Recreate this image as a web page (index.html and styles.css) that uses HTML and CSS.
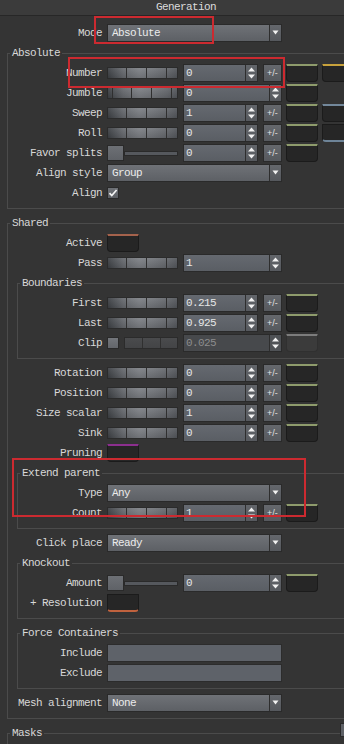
FILE: index.html
```html
<!DOCTYPE html>
<html>
<head>
<meta charset="utf-8">
<link rel="stylesheet" href="styles.css">
</head>
<body>
<div class="panel">
  <div class="title">Generation</div>

  <div class="row mode">
    <span class="lab">Mode</span>
    <div class="dd"><span class="dd-v">Absolute</span><span class="dd-a"><svg width="11" height="16" viewBox="0 0 11 16"><path d="M2.5 5.5h6l-3 4z" fill="#f2f2f2"/></svg></span></div>
  </div>

  <fieldset class="g first">
    <legend>Absolute</legend>
    <div class="gb">
      <div class="row">
        <span class="lab">Number</span><span class="sl"></span>
        <span class="sp"><span class="sp-f">0</span><span class="sp-a"><svg width="11" height="16" viewBox="0 0 11 16"><path d="M2 6.5L5.5 2.5L9 6.5z M2 9.5h7L5.5 13.5z" fill="#f2f2f2"/></svg></span></span>
        <span class="pm">+/-</span><span class="bx c-green"></span><span class="bx c-yellow"></span>
      </div>
      <div class="row">
        <span class="lab">Jumble</span><span class="sl alt"></span>
        <span class="sp long"><span class="sp-f">0</span><span class="sp-a"><svg width="11" height="16" viewBox="0 0 11 16"><path d="M2 6.5L5.5 2.5L9 6.5z M2 9.5h7L5.5 13.5z" fill="#f2f2f2"/></svg></span></span>
        <span class="bx c-green"></span>
      </div>
      <div class="row">
        <span class="lab">Sweep</span><span class="sl"></span>
        <span class="sp"><span class="sp-f">1</span><span class="sp-a"><svg width="11" height="16" viewBox="0 0 11 16"><path d="M2 6.5L5.5 2.5L9 6.5z M2 9.5h7L5.5 13.5z" fill="#f2f2f2"/></svg></span></span>
        <span class="pm">+/-</span><span class="bx c-green"></span><span class="bx c-blue"></span>
      </div>
      <div class="row">
        <span class="lab">Roll</span><span class="sl"></span>
        <span class="sp"><span class="sp-f">0</span><span class="sp-a"><svg width="11" height="16" viewBox="0 0 11 16"><path d="M2 6.5L5.5 2.5L9 6.5z M2 9.5h7L5.5 13.5z" fill="#f2f2f2"/></svg></span></span>
        <span class="pm">+/-</span><span class="bx c-green"></span><span class="bx c-none b-blue"></span>
      </div>
      <div class="row">
        <span class="lab">Favor splits</span><span class="fs"><span class="fs-h"></span><span class="fs-t"></span></span>
        <span class="sp"><span class="sp-f">0</span><span class="sp-a"><svg width="11" height="16" viewBox="0 0 11 16"><path d="M2 6.5L5.5 2.5L9 6.5z M2 9.5h7L5.5 13.5z" fill="#f2f2f2"/></svg></span></span>
        <span class="pm">+/-</span><span class="bx c-green"></span>
      </div>
      <div class="row">
        <span class="lab">Align style</span>
        <div class="dd"><span class="dd-v">Group</span><span class="dd-a"><svg width="11" height="16" viewBox="0 0 11 16"><path d="M2.5 5.5h6l-3 4z" fill="#f2f2f2"/></svg></span></div>
      </div>
      <div class="row">
        <span class="lab">Align</span>
        <span class="ck"><svg width="12" height="12" viewBox="0 0 12 12"><path d="M2.5 6.2L4.8 8.6L9.6 3" fill="none" stroke="#f4f4f4" stroke-width="1.7"/></svg></span>
      </div>
    </div>
  </fieldset>

  <fieldset class="g wide">
    <legend>Shared</legend>
    <div class="gb">
      <div class="row">
        <span class="lab">Active</span><span class="bx c-brown"></span>
      </div>
      <div class="row">
        <span class="lab">Pass</span><span class="sl"></span>
        <span class="sp long"><span class="sp-f">1</span><span class="sp-a"><svg width="11" height="16" viewBox="0 0 11 16"><path d="M2 6.5L5.5 2.5L9 6.5z M2 9.5h7L5.5 13.5z" fill="#f2f2f2"/></svg></span></span>
      </div>

      <fieldset class="g inner">
        <legend>Boundaries</legend>
        <div class="gb">
          <div class="row">
            <span class="lab">First</span><span class="sl"></span>
            <span class="sp"><span class="sp-f">0.215</span><span class="sp-a"><svg width="11" height="16" viewBox="0 0 11 16"><path d="M2 6.5L5.5 2.5L9 6.5z M2 9.5h7L5.5 13.5z" fill="#f2f2f2"/></svg></span></span>
            <span class="pm">+/-</span><span class="bx c-green"></span>
          </div>
          <div class="row">
            <span class="lab">Last</span><span class="sl"></span>
            <span class="sp"><span class="sp-f">0.925</span><span class="sp-a"><svg width="11" height="16" viewBox="0 0 11 16"><path d="M2 6.5L5.5 2.5L9 6.5z M2 9.5h7L5.5 13.5z" fill="#f2f2f2"/></svg></span></span>
            <span class="pm">+/-</span><span class="bx c-green"></span>
          </div>
          <div class="row">
            <span class="lab">Clip</span><span class="cb"></span><span class="sl off"></span>
            <span class="sp long off"><span class="sp-f">0.025</span><span class="sp-a"><svg width="11" height="16" viewBox="0 0 11 16"><path d="M2 6.5L5.5 2.5L9 6.5z M2 9.5h7L5.5 13.5z" fill="#f2f2f2"/></svg></span></span>
            <span class="bx off c-gray"></span>
          </div>
        </div>
      </fieldset>

      <div class="row">
        <span class="lab">Rotation</span><span class="sl"></span>
        <span class="sp"><span class="sp-f">0</span><span class="sp-a"><svg width="11" height="16" viewBox="0 0 11 16"><path d="M2 6.5L5.5 2.5L9 6.5z M2 9.5h7L5.5 13.5z" fill="#f2f2f2"/></svg></span></span>
        <span class="pm">+/-</span><span class="bx c-green"></span>
      </div>
      <div class="row">
        <span class="lab">Position</span><span class="sl"></span>
        <span class="sp"><span class="sp-f">0</span><span class="sp-a"><svg width="11" height="16" viewBox="0 0 11 16"><path d="M2 6.5L5.5 2.5L9 6.5z M2 9.5h7L5.5 13.5z" fill="#f2f2f2"/></svg></span></span>
        <span class="pm">+/-</span><span class="bx c-green"></span>
      </div>
      <div class="row">
        <span class="lab">Size scalar</span><span class="sl"></span>
        <span class="sp"><span class="sp-f">1</span><span class="sp-a"><svg width="11" height="16" viewBox="0 0 11 16"><path d="M2 6.5L5.5 2.5L9 6.5z M2 9.5h7L5.5 13.5z" fill="#f2f2f2"/></svg></span></span>
        <span class="pm">+/-</span><span class="bx c-green"></span>
      </div>
      <div class="row">
        <span class="lab">Sink</span><span class="sl"></span>
        <span class="sp"><span class="sp-f">0</span><span class="sp-a"><svg width="11" height="16" viewBox="0 0 11 16"><path d="M2 6.5L5.5 2.5L9 6.5z M2 9.5h7L5.5 13.5z" fill="#f2f2f2"/></svg></span></span>
        <span class="pm">+/-</span><span class="bx c-green"></span>
      </div>
      <div class="row">
        <span class="lab">Pruning</span><span class="bx c-purple"></span>
      </div>

      <fieldset class="g inner">
        <legend>Extend parent</legend>
        <div class="gb">
          <div class="row">
            <span class="lab">Type</span>
            <div class="dd"><span class="dd-v">Any</span><span class="dd-a"><svg width="11" height="16" viewBox="0 0 11 16"><path d="M2.5 5.5h6l-3 4z" fill="#f2f2f2"/></svg></span></div>
          </div>
          <div class="row">
            <span class="lab">Count</span><span class="sl"></span>
            <span class="sp"><span class="sp-f">1</span><span class="sp-a"><svg width="11" height="16" viewBox="0 0 11 16"><path d="M2 6.5L5.5 2.5L9 6.5z M2 9.5h7L5.5 13.5z" fill="#f2f2f2"/></svg></span></span>
            <span class="pm">+/-</span><span class="bx c-green"></span>
          </div>
        </div>
      </fieldset>

      <div class="row">
        <span class="lab">Click place</span>
        <div class="dd"><span class="dd-v">Ready</span><span class="dd-a"><svg width="11" height="16" viewBox="0 0 11 16"><path d="M2.5 5.5h6l-3 4z" fill="#f2f2f2"/></svg></span></div>
      </div>

      <fieldset class="g inner">
        <legend>Knockout</legend>
        <div class="gb">
          <div class="row">
            <span class="lab">Amount</span><span class="fs"><span class="fs-h"></span><span class="fs-t"></span></span>
            <span class="sp long"><span class="sp-f">0</span><span class="sp-a"><svg width="11" height="16" viewBox="0 0 11 16"><path d="M2 6.5L5.5 2.5L9 6.5z M2 9.5h7L5.5 13.5z" fill="#f2f2f2"/></svg></span></span>
            <span class="bx c-green"></span>
          </div>
          <div class="row">
            <span class="lab">+ Resolution</span><span class="bx c-none b-orange"></span>
          </div>
        </div>
      </fieldset>

      <fieldset class="g inner wide">
        <legend>Force Containers</legend>
        <div class="gb">
          <div class="row">
            <span class="lab">Include</span><span class="tx"></span>
          </div>
          <div class="row">
            <span class="lab">Exclude</span><span class="tx"></span>
          </div>
        </div>
      </fieldset>

      <div class="row">
        <span class="lab">Mesh alignment</span>
        <div class="dd"><span class="dd-v">None</span><span class="dd-a"><svg width="11" height="16" viewBox="0 0 11 16"><path d="M2.5 5.5h6l-3 4z" fill="#f2f2f2"/></svg></span></div>
      </div>
    </div>
  </fieldset>

  <fieldset class="g wide masks">
    <legend>Masks</legend>
    <div class="gb"></div>
  </fieldset>

  <span class="edge-btn"></span>
  <span class="note n1"></span>
  <span class="note n2"></span>
  <span class="note n3"></span>
</div>
</body>
</html>
```

FILE: styles.css
```css
html, body {
  margin: 0;
  padding: 0;
}
body {
  background: #343434;
  overflow: hidden;
  font-family: "Liberation Mono", "DejaVu Sans Mono", monospace;
  font-size: 11px;
  letter-spacing: -0.6px;
  color: #d8d8d8;
}
.panel {
  position: relative;
  width: 344px;
  height: 744px;
  overflow: hidden;
}
.title {
  height: 15px;
  line-height: 15px;
  padding-left: 28px;
  text-align: center;
  background: #3b3b3b;
  border-bottom: 1px solid #272727;
  color: #dcdcdc;
}
.row {
  display: flex;
  align-items: center;
  height: 20px;
}
.mode {
  margin-top: 7px;
}
.lab {
  flex: none;
  width: var(--lw, 102px);
  margin-right: 5px;
  text-align: right;
  white-space: nowrap;
  line-height: 20px;
}

/* group frames */
fieldset.g {
  margin: 4px -30px 0 7px;
  padding: 4px 0 5px 0;
  border: 1px solid #4b4b4b;
  min-width: 0;
}
fieldset.g.wide {
  margin-top: 8px;
}
fieldset.g.first {
  margin-top: 4px;
}
fieldset.g.inner {
  margin-left: 0;
  margin-right: 0;
  margin-top: 4px;
}
fieldset.g.inner.wide {
  margin-top: 8px;
}
fieldset.g legend {
  padding: 0 2px;
  margin-left: 2px;
  height: 12px;
  line-height: 12px;
  color: #d8d8d8;
}
.gb {
  padding-left: 9px;
  --lw: 85px;
}
.inner .gb {
  padding-left: 0;
  --lw: 84px;
}
fieldset.g + .row {
  margin-top: 4px;
}
.masks .gb {
  height: 30px;
}

/* dropdown */
.dd {
  flex: none;
  display: flex;
  width: 175px;
  height: 18px;
  box-sizing: border-box;
  border: 1px solid #2a2a2a;
  background: linear-gradient(#6f7277, #5d6065);
}
.dd-v {
  flex: 1;
  padding-left: 4px;
  line-height: 17px;
  color: #ececec;
}
.dd-a {
  width: 12px;
  box-sizing: border-box;
  border-left: 1px solid #2e2e2e;
  background: linear-gradient(#64676c, #55585d);
  display: flex;
  justify-content: center;
  align-items: center;
}
.dd-a svg, .sp-a svg {
  display: block;
}

/* segmented slider */
.sl {
  flex: none;
  width: 71px;
  height: 12px;
  box-sizing: border-box;
  border: 1px solid #2b2b2b;
  background:
    linear-gradient(#2f2f2f, #2f2f2f) 18px 0 / 1px 100% no-repeat,
    linear-gradient(#2f2f2f, #2f2f2f) 38px 0 / 1px 100% no-repeat,
    linear-gradient(#2f2f2f, #2f2f2f) 58px 0 / 1px 100% no-repeat,
    linear-gradient(rgba(255,255,255,0.06), rgba(0,0,0,0.12)),
    linear-gradient(to right, #3f4246, #686b70 22%, #7e8186 45%, #74777c 65%, #66696e 85%, #55585d);
}
.sl.alt {
  background:
    linear-gradient(#2f2f2f, #2f2f2f) 4px 0 / 1px 100% no-repeat,
    linear-gradient(#2f2f2f, #2f2f2f) 23px 0 / 1px 100% no-repeat,
    linear-gradient(#2f2f2f, #2f2f2f) 43px 0 / 1px 100% no-repeat,
    linear-gradient(#2f2f2f, #2f2f2f) 63px 0 / 1px 100% no-repeat,
    linear-gradient(rgba(255,255,255,0.06), rgba(0,0,0,0.12)),
    linear-gradient(to right, #3f4246, #686b70 22%, #7e8186 45%, #74777c 65%, #66696e 85%, #55585d);
}
.sl.off {
  width: 54px;
  margin-left: 5px;
  background:
    linear-gradient(#303030, #303030) 17px 0 / 1px 100% no-repeat,
    linear-gradient(#303030, #303030) 35px 0 / 1px 100% no-repeat,
    linear-gradient(#4a4b4d, #434446);
}
.cb {
  flex: none;
  width: 12px;
  height: 12px;
  box-sizing: border-box;
  border: 1px solid #2a2a2a;
  background: linear-gradient(#73767b, #63666b);
}

/* favor-style slider */
.fs {
  flex: none;
  width: 71px;
  height: 16px;
  display: flex;
  align-items: center;
}
.fs-h {
  width: 17px;
  height: 16px;
  box-sizing: border-box;
  border: 1px solid #2a2a2a;
  background: linear-gradient(#6d7075, #5f6267);
}
.fs-t {
  flex: 1;
  height: 5px;
  box-sizing: border-box;
  border: 1px solid #2a2a2a;
  background: #55585d;
}

/* spinbox */
.sp {
  flex: none;
  display: flex;
  width: 75px;
  height: 18px;
  margin-left: 5px;
  box-sizing: border-box;
  border: 1px solid #2a2a2a;
}
.sp.long {
  width: 99px;
}
.sp-f {
  flex: 1;
  padding-left: 2px;
  line-height: 17px;
  color: #e6e6e6;
  background: linear-gradient(#656970, #5a5e64);
}
.sp-a {
  width: 12px;
  box-sizing: border-box;
  border-left: 1px solid #2e2e2e;
  background: linear-gradient(#62656a, #56595e);
  display: flex;
  justify-content: center;
  align-items: center;
}
.sp.off .sp-f {
  background: #47494c;
  color: #8c8c8c;
}
.sp.off .sp-a {
  background: #4f5256;
}

/* +/- button */
.pm {
  flex: none;
  width: 19px;
  height: 18px;
  margin-left: 5px;
  box-sizing: border-box;
  border: 1px solid #2a2a2a;
  background: linear-gradient(#65686d, #56595e);
  font-family: "Liberation Sans", Arial, sans-serif;
  font-size: 9px;
  letter-spacing: 0;
  line-height: 16px;
  text-align: center;
  color: #e2e2e2;
}

/* colour boxes */
.bx {
  flex: none;
  width: 32px;
  height: 18px;
  margin-left: 4px;
  box-sizing: border-box;
  background: #262626;
  border: 1px solid #1b1b1b;
  border-top: 2px solid #8e9b6c;
  border-radius: 1px 1px 4px 4px;
}
.lab + .bx {
  margin-left: 0;
}
.c-green { border-top-color: #8e9b6c; }
.c-yellow { border-top-color: #c8a23c; }
.c-blue { border-top-color: #73889b; }
.c-brown { border-top-color: #a4624c; }
.c-purple { border-top-color: #8c2f8e; }
.c-gray { border-top-color: #7c7c7c; }
.c-none { border-top: 1px solid #1b1b1b; }
.b-blue { border-bottom: 2px solid #6e8498; }
.b-orange { border-bottom: 2px solid #c0623e; }
.bx.off {
  background: #3b3b3b;
  border-color: #303030;
  border-top-color: #7c7c7c;
}

/* checkbox */
.ck {
  flex: none;
  width: 12px;
  height: 12px;
  box-sizing: border-box;
  border: 1px solid #2a2a2a;
  background: linear-gradient(#6d7075, #5d6065);
}
.ck svg {
  display: block;
  margin: -1px 0 0 -1px;
}

/* text field */
.tx {
  flex: none;
  width: 175px;
  height: 18px;
  box-sizing: border-box;
  border: 1px solid #2c2c2c;
  background: #5e6269;
}

/* right edge button near Masks */
.edge-btn {
  position: absolute;
  left: 340px;
  top: 723px;
  width: 12px;
  height: 14px;
  box-sizing: border-box;
  border: 1px solid #2a2a2a;
  background: #5e6166;
}

/* red annotation rectangles */
.note {
  position: absolute;
  box-sizing: border-box;
  border: 2px solid #cc2a30;
}
.n1 { left: 94px; top: 16px; width: 120px; height: 28px; }
.n2 { left: 68px; top: 57px; width: 217px; height: 31px; }
.n3 { left: 12px; top: 458px; width: 294px; height: 59px; }
```
